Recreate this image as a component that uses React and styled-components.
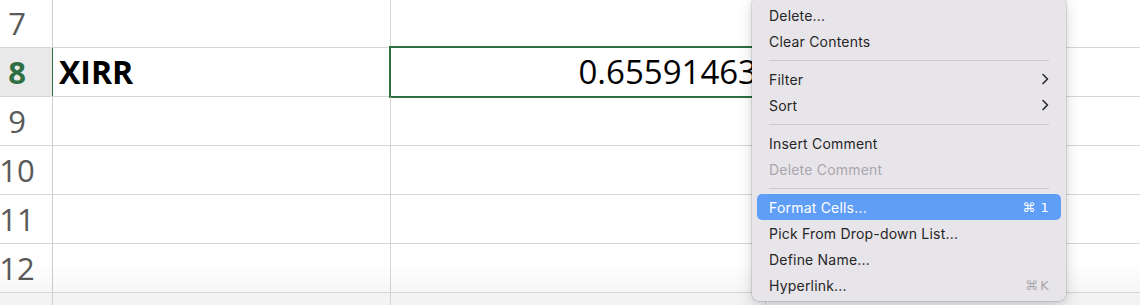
import React from "react";
import styled, { createGlobalStyle } from "styled-components";

const GlobalStyle = createGlobalStyle`
  html, body {
    margin: 0;
    padding: 0;
    background: #ffffff;
    overflow: hidden;
  }
  body {
    font-family: "Open Sans", "Noto Sans", sans-serif;
  }
`;

const Screen = styled.div`
  position: relative;
  width: 1140px;
  height: 305px;
  overflow: hidden;
  background: #ffffff;
`;

const Sheet = styled.div`
  display: flex;
  flex-direction: column;
  margin-top: -1px;
  margin-left: -18px;
`;

const Row = styled.div`
  display: flex;
  height: 48px;
  border-bottom: 1px solid #d6d6d6;
  background: ${(p) => (p.$shade ? "#f3f3f3" : "transparent")};
`;

const RowHeader = styled.div`
  flex: 0 0 70px;
  display: flex;
  align-items: center;
  justify-content: center;
  line-height: 48px;
  font-size: 31px;
  font-weight: ${(p) => (p.$active ? 700 : 400)};
  color: ${(p) => (p.$active ? "#2f6f42" : "#5a5a5a")};
  background: ${(p) => (p.$active ? "#e9e9e9" : "transparent")};
  border-right: 1px solid ${(p) => (p.$active ? "#2f6f42" : "#cfcfcf")};
`;

const Cell = styled.div`
  position: relative;
  flex: 0 0 ${(p) => p.$width}px;
  display: flex;
  align-items: center;
  justify-content: ${(p) => (p.$number ? "flex-end" : "flex-start")};
  padding: 0 ${(p) => (p.$number ? "8px" : "6px")};
  box-sizing: border-box;
  line-height: 48px;
  font-size: ${(p) => (p.$number ? "33px" : "32px")};
  font-weight: ${(p) => (p.$bold ? 700 : 400)};
  color: #000000;
  border-right: 1px solid #d6d6d6;
  white-space: nowrap;

  ${(p) =>
    p.$selected &&
    `
    &::after {
      content: "";
      position: absolute;
      left: -2px;
      top: -2px;
      right: -2px;
      bottom: -2px;
      border: 2px solid #2f6f42;
    }
  `}
`;

const Filler = styled.div`
  flex: 1 1 auto;
`;

const BottomFade = styled.div`
  position: absolute;
  left: 0;
  right: 0;
  top: 262px;
  height: 30px;
  background: linear-gradient(rgba(0, 0, 0, 0), rgba(0, 0, 0, 0.035));
  pointer-events: none;
`;

const Menu = styled.div`
  position: absolute;
  left: 752px;
  top: -4px;
  width: 314px;
  box-sizing: border-box;
  padding: 6px 5px 3px;
  background: #e8e5ea;
  border-radius: 7px;
  box-shadow: 0 0 0 0.5px rgba(0, 0, 0, 0.18), 0 6px 16px rgba(0, 0, 0, 0.16),
    0 0 4px rgba(0, 0, 0, 0.08);
  font-family: "Inter", "Noto Sans", sans-serif;
  font-size: 14px;
`;

const Item = styled.div`
  display: flex;
  align-items: center;
  justify-content: space-between;
  height: 26px;
  padding: 0 12px;
  border-radius: 5px;
  letter-spacing: 0.2px;
  color: ${(p) => (p.$active ? "#ffffff" : p.$disabled ? "#aaa6ad" : "#262626")};
  background: ${(p) => (p.$active ? "#5f9ef6" : "transparent")};
`;

const Separator = styled.div`
  height: 1px;
  margin: 6px 12px 5px;
  background: #cdcad0;
`;

const Shortcut = styled.span`
  font-family: "DejaVu Sans", "Inter", sans-serif;
  font-size: 13px;
  color: ${(p) => (p.$dim ? "#a9a6ac" : "inherit")};
  display: flex;
  align-items: center;
  gap: ${(p) => (p.$dim ? "2px" : "5px")};
`;

const Chevron = () => (
  <svg width="8" height="12" viewBox="0 0 8 12" fill="none">
    <path
      d="M2 1.5 L6.5 6 L2 10.5"
      stroke="#2a2a2a"
      strokeWidth="1.6"
      strokeLinecap="round"
      strokeLinejoin="round"
    />
  </svg>
);

const rows = [7, 8, 9, 10, 11, 12, 13];

export default function App() {
  return (
    <>
      <GlobalStyle />
      <Screen>
        <Sheet>
          {rows.map((n) => (
            <Row key={n} $shade={n === 13}>
              <RowHeader $active={n === 8}>{n < 13 ? n : ""}</RowHeader>
              <Cell $width={338} $bold>
                {n === 8 ? "XIRR" : ""}
              </Cell>
              <Cell $width={375} $number $selected={n === 8}>
                {n === 8 ? "0.65591463" : ""}
              </Cell>
              <Filler />
            </Row>
          ))}
        </Sheet>
        <BottomFade />
        <Menu>
          <Item>Delete...</Item>
          <Item>Clear Contents</Item>
          <Separator />
          <Item>
            Filter
            <Chevron />
          </Item>
          <Item>
            Sort
            <Chevron />
          </Item>
          <Separator />
          <Item>Insert Comment</Item>
          <Item $disabled>Delete Comment</Item>
          <Separator />
          <Item $active>
            Format Cells...
            <Shortcut>
              <span>⌘</span>
              <span>1</span>
            </Shortcut>
          </Item>
          <Item>Pick From Drop-down List...</Item>
          <Item>Define Name...</Item>
          <Item>
            Hyperlink...
            <Shortcut $dim>
              <span>⌘</span>
              <span>K</span>
            </Shortcut>
          </Item>
        </Menu>
      </Screen>
    </>
  );
}
